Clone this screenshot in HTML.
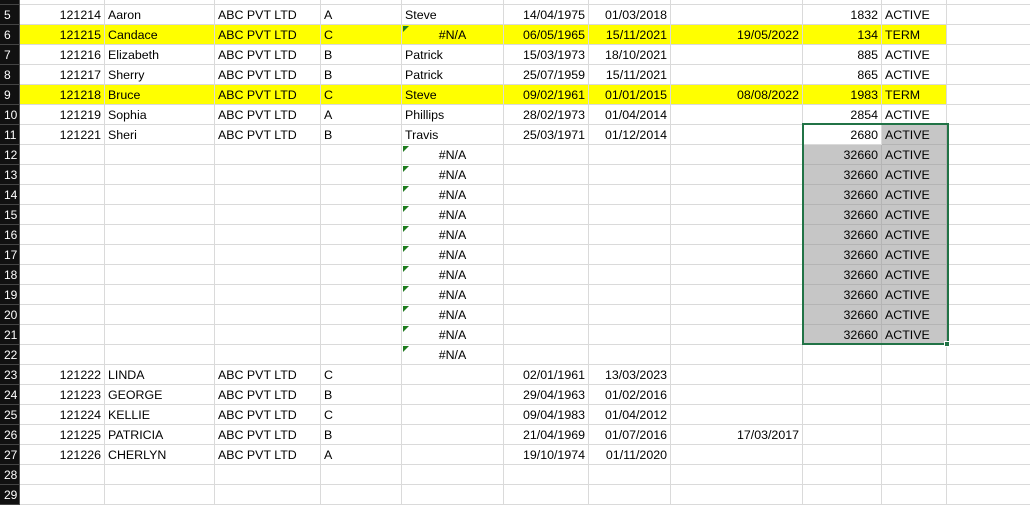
<!DOCTYPE html>
<html><head><meta charset="utf-8"><style>
*{box-sizing:border-box;margin:0;padding:0}
body{width:1030px;height:501px;overflow:hidden;background:#fff;position:relative;font-family:"Liberation Sans",Arial,sans-serif;font-size:12.4px;color:#000}
.r{position:absolute;left:0;width:1130px;height:20px;display:grid;grid-template-columns:20px 85px 110px 106px 81px 102px 85px 82px 132px 79px 65px 100px}
.r>div{border-right:1px solid #dadada;border-bottom:1px solid #dadada;height:20px;line-height:20px;padding:0 3px;white-space:nowrap;overflow:hidden;position:relative}
.r>div:first-child{background:#111;color:#fff;border-right:1px solid #555;border-bottom:1px solid #444;padding:0 0 0 4px;font-size:12px}
.n{text-align:right}.c{text-align:center}
.y>div:nth-child(n+2):nth-child(-n+11){background:#ffff00}
.g{background:#c6c6c6!important;border-color:#b4b4b4!important}
.t::before{content:"";position:absolute;left:1px;top:1px;border-top:6px solid #1e7b1e;border-right:6px solid transparent}
#sel{position:absolute;left:802px;top:123px;width:147px;height:222px;border:2px solid #217346}
#h{position:absolute;left:944px;top:341px;width:6px;height:6px;background:#217346;border:1px solid #fff}
</style></head><body>
<div class="r" style="top:-15px"><div>4</div><div></div><div></div><div></div><div></div><div></div><div class="n">01/01/1970</div><div class="n">01/01/2010</div><div></div><div></div><div></div><div></div></div>
<div class="r" style="top:5px"><div>5</div><div class="n">121214</div><div>Aaron</div><div>ABC PVT LTD</div><div>A</div><div>Steve</div><div class="n">14/04/1975</div><div class="n">01/03/2018</div><div></div><div class="n">1832</div><div>ACTIVE</div><div></div></div>
<div class="r y" style="top:25px"><div>6</div><div class="n">121215</div><div>Candace</div><div>ABC PVT LTD</div><div>C</div><div class="c t">#N/A</div><div class="n">06/05/1965</div><div class="n">15/11/2021</div><div class="n">19/05/2022</div><div class="n">134</div><div>TERM</div><div></div></div>
<div class="r" style="top:45px"><div>7</div><div class="n">121216</div><div>Elizabeth</div><div>ABC PVT LTD</div><div>B</div><div>Patrick</div><div class="n">15/03/1973</div><div class="n">18/10/2021</div><div></div><div class="n">885</div><div>ACTIVE</div><div></div></div>
<div class="r" style="top:65px"><div>8</div><div class="n">121217</div><div>Sherry</div><div>ABC PVT LTD</div><div>B</div><div>Patrick</div><div class="n">25/07/1959</div><div class="n">15/11/2021</div><div></div><div class="n">865</div><div>ACTIVE</div><div></div></div>
<div class="r y" style="top:85px"><div>9</div><div class="n">121218</div><div>Bruce</div><div>ABC PVT LTD</div><div>C</div><div>Steve</div><div class="n">09/02/1961</div><div class="n">01/01/2015</div><div class="n">08/08/2022</div><div class="n">1983</div><div>TERM</div><div></div></div>
<div class="r" style="top:105px"><div>10</div><div class="n">121219</div><div>Sophia</div><div>ABC PVT LTD</div><div>A</div><div>Phillips</div><div class="n">28/02/1973</div><div class="n">01/04/2014</div><div></div><div class="n">2854</div><div>ACTIVE</div><div></div></div>
<div class="r" style="top:125px"><div>11</div><div class="n">121221</div><div>Sheri</div><div>ABC PVT LTD</div><div>B</div><div>Travis</div><div class="n">25/03/1971</div><div class="n">01/12/2014</div><div></div><div class="n">2680</div><div class="g">ACTIVE</div><div></div></div>
<div class="r" style="top:145px"><div>12</div><div></div><div></div><div></div><div></div><div class="c t">#N/A</div><div></div><div></div><div></div><div class="n g">32660</div><div class="g">ACTIVE</div><div></div></div>
<div class="r" style="top:165px"><div>13</div><div></div><div></div><div></div><div></div><div class="c t">#N/A</div><div></div><div></div><div></div><div class="n g">32660</div><div class="g">ACTIVE</div><div></div></div>
<div class="r" style="top:185px"><div>14</div><div></div><div></div><div></div><div></div><div class="c t">#N/A</div><div></div><div></div><div></div><div class="n g">32660</div><div class="g">ACTIVE</div><div></div></div>
<div class="r" style="top:205px"><div>15</div><div></div><div></div><div></div><div></div><div class="c t">#N/A</div><div></div><div></div><div></div><div class="n g">32660</div><div class="g">ACTIVE</div><div></div></div>
<div class="r" style="top:225px"><div>16</div><div></div><div></div><div></div><div></div><div class="c t">#N/A</div><div></div><div></div><div></div><div class="n g">32660</div><div class="g">ACTIVE</div><div></div></div>
<div class="r" style="top:245px"><div>17</div><div></div><div></div><div></div><div></div><div class="c t">#N/A</div><div></div><div></div><div></div><div class="n g">32660</div><div class="g">ACTIVE</div><div></div></div>
<div class="r" style="top:265px"><div>18</div><div></div><div></div><div></div><div></div><div class="c t">#N/A</div><div></div><div></div><div></div><div class="n g">32660</div><div class="g">ACTIVE</div><div></div></div>
<div class="r" style="top:285px"><div>19</div><div></div><div></div><div></div><div></div><div class="c t">#N/A</div><div></div><div></div><div></div><div class="n g">32660</div><div class="g">ACTIVE</div><div></div></div>
<div class="r" style="top:305px"><div>20</div><div></div><div></div><div></div><div></div><div class="c t">#N/A</div><div></div><div></div><div></div><div class="n g">32660</div><div class="g">ACTIVE</div><div></div></div>
<div class="r" style="top:325px"><div>21</div><div></div><div></div><div></div><div></div><div class="c t">#N/A</div><div></div><div></div><div></div><div class="n g">32660</div><div class="g">ACTIVE</div><div></div></div>
<div class="r" style="top:345px"><div>22</div><div></div><div></div><div></div><div></div><div class="c t">#N/A</div><div></div><div></div><div></div><div></div><div></div><div></div></div>
<div class="r" style="top:365px"><div>23</div><div class="n">121222</div><div>LINDA</div><div>ABC PVT LTD</div><div>C</div><div></div><div class="n">02/01/1961</div><div class="n">13/03/2023</div><div></div><div></div><div></div><div></div></div>
<div class="r" style="top:385px"><div>24</div><div class="n">121223</div><div>GEORGE</div><div>ABC PVT LTD</div><div>B</div><div></div><div class="n">29/04/1963</div><div class="n">01/02/2016</div><div></div><div></div><div></div><div></div></div>
<div class="r" style="top:405px"><div>25</div><div class="n">121224</div><div>KELLIE</div><div>ABC PVT LTD</div><div>C</div><div></div><div class="n">09/04/1983</div><div class="n">01/04/2012</div><div></div><div></div><div></div><div></div></div>
<div class="r" style="top:425px"><div>26</div><div class="n">121225</div><div>PATRICIA</div><div>ABC PVT LTD</div><div>B</div><div></div><div class="n">21/04/1969</div><div class="n">01/07/2016</div><div class="n">17/03/2017</div><div></div><div></div><div></div></div>
<div class="r" style="top:445px"><div>27</div><div class="n">121226</div><div>CHERLYN</div><div>ABC PVT LTD</div><div>A</div><div></div><div class="n">19/10/1974</div><div class="n">01/11/2020</div><div></div><div></div><div></div><div></div></div>
<div class="r" style="top:465px"><div>28</div><div></div><div></div><div></div><div></div><div></div><div></div><div></div><div></div><div></div><div></div><div></div></div>
<div class="r" style="top:485px"><div>29</div><div></div><div></div><div></div><div></div><div></div><div></div><div></div><div></div><div></div><div></div><div></div></div>
<div id="sel"></div><div id="h"></div>
</body></html>
